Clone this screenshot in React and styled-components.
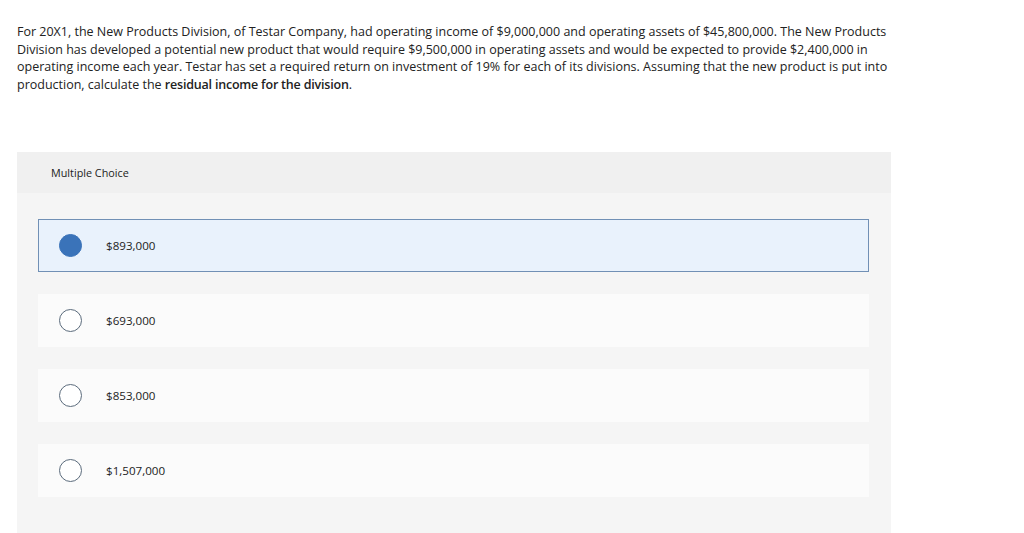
import React from "react"
import styled, { createGlobalStyle } from "styled-components"

const GlobalStyle = createGlobalStyle`
  body {
    margin: 0;
    background: #fff;
    font-family: "Open Sans", "Liberation Sans", sans-serif;
    color: #1d1d1d;
  }
`

const Page = styled.div`
  padding: 23px 0 0 17px;
  width: 874px;
`

const Question = styled.p`
  margin: 0;
  font-size: 12.5px;
  line-height: 17.5px;
  color: #222;
`

const Strong = styled.strong`
  font-weight: 600;
  letter-spacing: -0.2px;
`

const Panel = styled.section`
  margin-top: 59px;
  background: #f5f5f5;
  padding-bottom: 40px;
`

const PanelHeader = styled.div`
  height: 41px;
  background: #f0f0f0;
  display: flex;
  align-items: center;
  padding-left: 34px;
  font-size: 10.8px;
  color: #222;
`

const Options = styled.div`
  display: flex;
  flex-direction: column;
  gap: 22px;
  padding: 26px 22px 0 21px;
`

const Option = styled.label`
  height: 53px;
  box-sizing: border-box;
  display: flex;
  align-items: center;
  gap: 24px;
  padding-left: 20px;
  background: ${p => (p.$selected ? "#e9f2fc" : "#fbfbfb")};
  border: 1px solid ${p => (p.$selected ? "#7190b5" : "#fbfbfb")};
  font-size: 11.6px;
  color: #222;
  cursor: pointer;
`

const Radio = styled.span`
  width: 23px;
  height: 23px;
  box-sizing: border-box;
  border-radius: 50%;
  flex-shrink: 0;
  background: ${p => (p.$checked ? "#3a73b9" : "#fff")};
  border: 1px solid ${p => (p.$checked ? "#3a73b9" : "#5b6b7c")};
`

const choices = ["$893,000", "$693,000", "$853,000", "$1,507,000"]

export default function App() {
  return (
    <>
      <GlobalStyle />
      <Page>
        <Question>
          For 20X1, the New Products Division, of Testar Company, had operating income of $9,000,000 and operating assets of $45,800,000. The New Products Division has developed a potential new product that would require $9,500,000 in operating assets and would be expected to provide $2,400,000 in operating income each year. Testar has set a required return on investment of 19% for each of its divisions. Assuming that the new product is put into production, calculate the <Strong>residual income for the division</Strong>.
        </Question>
        <Panel>
          <PanelHeader>Multiple Choice</PanelHeader>
          <Options>
            {choices.map((c, i) => (
              <Option key={c} $selected={i === 0}>
                <Radio $checked={i === 0} />
                {c}
              </Option>
            ))}
          </Options>
        </Panel>
      </Page>
    </>
  )
}
